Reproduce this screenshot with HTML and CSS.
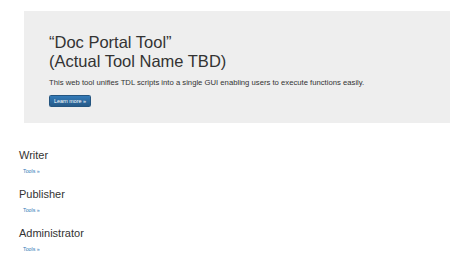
FILE: index.html
```html
<!DOCTYPE html>
<html>
<head>
<meta charset="utf-8">
<link rel="stylesheet" href="styles.css">
</head>
<body>
<div class="page">
  <div class="jumbotron">
    <h1 class="title">“Doc Portal Tool”<br>(Actual Tool Name TBD)</h1>
    <p class="lead">This web tool unifies TDL scripts into a single GUI enabling users to execute functions easily.</p>
    <a class="btn" href="#">Learn more »</a>
  </div>
  <div class="sections">
    <div class="section">
      <h2 class="sec-title">Writer</h2>
      <a class="tools" href="#">Tools »</a>
    </div>
    <div class="section">
      <h2 class="sec-title">Publisher</h2>
      <a class="tools" href="#">Tools »</a>
    </div>
    <div class="section">
      <h2 class="sec-title">Administrator</h2>
      <a class="tools" href="#">Tools »</a>
    </div>
  </div>
</div>
</body>
</html>
```
FILE: styles.css
```css
* { box-sizing: border-box; }
html, body { margin: 0; padding: 0; background: #fff; }
body {
  font-family: "Liberation Sans", Arial, Helvetica, sans-serif;
  color: #333;
}
.page {
  padding-top: 11px;
}
.jumbotron {
  margin: 0 24px;
  height: 112px;
  background: #eeeeee;
  padding: 22px 25px 0 25px;
  display: flex;
  flex-direction: column;
  align-items: flex-start;
}
.title {
  margin: 0;
  font-size: 16.5px;
  line-height: 18.5px;
  font-weight: 400;
  color: #333;
}
.lead {
  margin: 6.5px 0 0 0;
  font-size: 7.7px;
  line-height: 11px;
  color: #333;
}
.btn {
  margin-top: 7px;
  display: inline-block;
  height: 12.5px;
  padding: 0 4px;
  font-size: 5.4px;
  line-height: 11.5px;
  color: #fff;
  text-decoration: none;
  background: linear-gradient(#337ab7, #265a88);
  border: 0.5px solid #245580;
  border-radius: 1.5px;
}
.sections {
  padding: 26px 0 0 19px;
  display: flex;
  flex-direction: column;
  gap: 12px;
}
.section {
  display: flex;
  flex-direction: column;
  align-items: flex-start;
}
.sec-title {
  margin: 0;
  font-size: 11px;
  line-height: 12px;
  font-weight: 400;
  color: #333;
}
.tools {
  margin: 5px 0 0 4px;
  font-size: 5.3px;
  line-height: 10px;
  color: #337ab7;
  text-decoration: none;
}
```
